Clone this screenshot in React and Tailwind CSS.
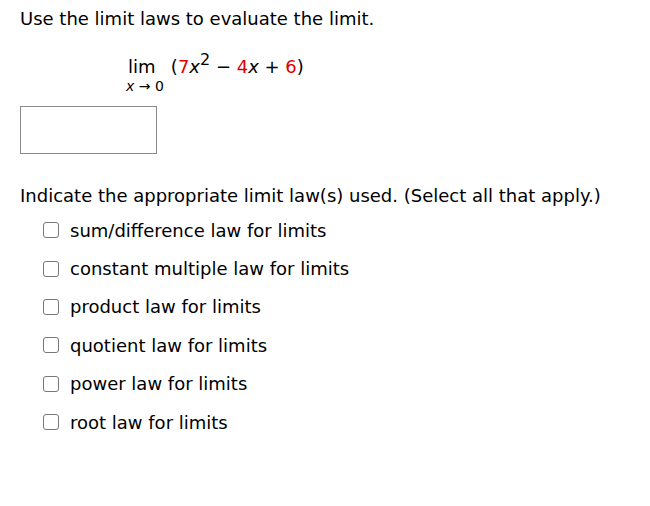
export default function App() {
  const laws = [
    'sum/difference law for limits',
    'constant multiple law for limits',
    'product law for limits',
    'quotient law for limits',
    'power law for limits',
    'root law for limits',
  ];

  return (
    <div className="min-h-[506px] w-[650px] bg-white pl-[20px] pt-[7px] text-[18px] text-black" style={{ fontFamily: '"DejaVu Sans", Verdana, sans-serif' }}>
      <p className="leading-[24px]">Use the limit laws to evaluate the limit.</p>

      {/* limit expression */}
      <div className="mt-[25px] ml-[106px] flex items-start">
        <div className="flex flex-col items-start">
          <span className="ml-[2px] leading-[22px]">lim</span>
          <span className="text-[14px] leading-[16px]"><i>x</i> → 0</span>
        </div>
        <span className="ml-[7px] leading-[22px]">
          (<span className="text-[#e00000]">7</span><i>x</i><span className="relative -top-[8px] text-[16px]">2</span> − <span className="text-[#e00000]">4</span><i>x</i> + <span className="text-[#e00000]">6</span>)
        </span>
      </div>

      <input type="text" className="mt-[12px] block h-[48px] w-[137px] border border-[#8a8a8a] outline-none" />

      <p className="mt-[30px] leading-[24px]">Indicate the appropriate limit law(s) used. (Select all that apply.)</p>

      <div className="mt-[3px] flex flex-col">
        {laws.map((law) => (
          <label key={law} className="flex h-[38.4px] items-center">
            <span className="ml-[23px] inline-block h-[16px] w-[16px] rounded-[3px] border border-[#777] bg-white" />
            <span className="ml-[11px]">{law}</span>
          </label>
        ))}
      </div>
    </div>
  );
}
